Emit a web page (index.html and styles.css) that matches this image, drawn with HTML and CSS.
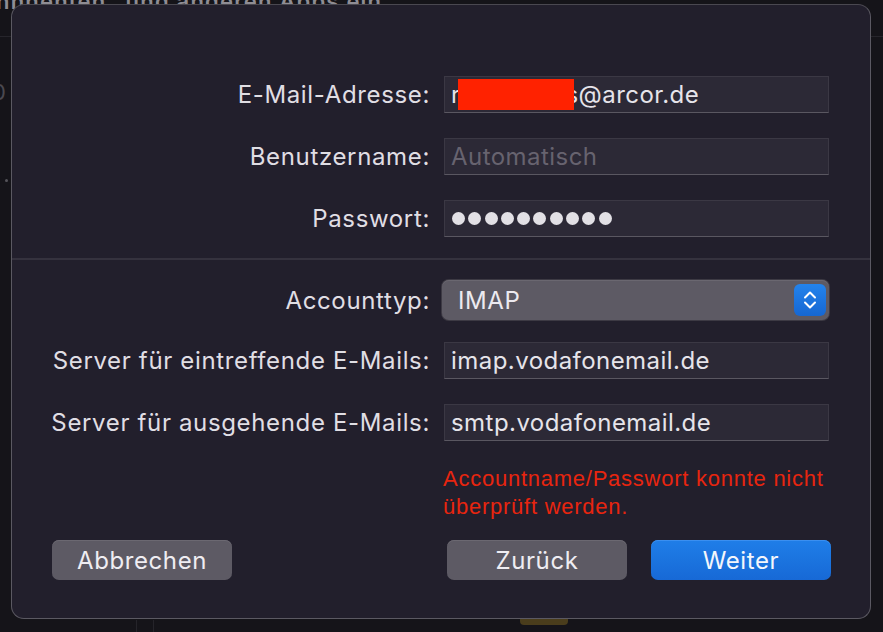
FILE: index.html
```html
<!DOCTYPE html>
<html lang="de">
<head>
<meta charset="utf-8">
<title>Account hinzufügen</title>
<link rel="stylesheet" href="styles.css">
</head>
<body>
<div class="backdrop">
  <div class="bg-text">nhnenten" und anderen Apps ein.</div>
  <div class="bg-rule"></div>
  <div class="bg-digit">0</div>
  <div class="bg-dot"></div>
  <div class="bg-vline one"></div>
  <div class="bg-vline two"></div>
  <div class="bg-tab"></div>

  <div class="sheet">
    <div class="form">
      <label class="label">E-Mail-Adresse:</label>
      <div class="field">r<span class="redact"></span>s@arcor.de</div>

      <label class="label">Benutzername:</label>
      <div class="field placeholder">Automatisch</div>

      <label class="label">Passwort:</label>
      <div class="field dots">
        <span></span><span></span><span></span><span></span><span></span><span></span><span></span><span></span><span></span><span></span>
      </div>
    </div>

    <div class="separator"></div>

    <div class="form lower">
      <label class="label">Accounttyp:</label>
      <div class="popup">
        <span>IMAP</span>
        <span class="stepper">
          <svg width="16" height="22" viewBox="0 0 16 22" fill="none" stroke="#ffffff" stroke-width="2" stroke-linecap="round" stroke-linejoin="round">
            <path d="M3 8.5 L8 3.5 L13 8.5"/>
            <path d="M3 13.5 L8 18.5 L13 13.5"/>
          </svg>
        </span>
      </div>

      <label class="label">Server für eintreffende E-Mails:</label>
      <div class="field">imap.vodafonemail.de</div>

      <label class="label spaced">Server für ausgehende E-Mails:</label>
      <div class="field spaced">smtp.vodafonemail.de</div>

      <div class="error">Accountname/Passwort konnte nicht überprüft werden.</div>
    </div>

    <div class="buttons">
      <button class="btn">Abbrechen</button>
      <div class="btn-group">
        <button class="btn">Zurück</button>
        <button class="btn primary">Weiter</button>
      </div>
    </div>
  </div>
</div>
</body>
</html>
```

FILE: styles.css
```css
html, body {
  margin: 0;
  padding: 0;
}

body {
  width: 883px;
  height: 632px;
  overflow: hidden;
  background: #151419;
  font-family: Inter, "Noto Sans", "Liberation Sans", sans-serif;
  color: #dedce2;
}

.backdrop {
  position: relative;
  width: 883px;
  height: 632px;
}

.bg-text {
  position: absolute;
  left: -4px;
  top: -12px;
  font-size: 22px;
  font-weight: 600;
  color: #8f8d94;
  letter-spacing: 1.2px;
  white-space: nowrap;
}

.bg-rule {
  position: absolute;
  left: 0;
  top: 36px;
  width: 883px;
  height: 1px;
  background: #26252b;
}

.bg-digit {
  position: absolute;
  left: -8px;
  top: 79px;
  font-size: 22px;
  color: #4a4950;
}

.bg-dot {
  position: absolute;
  left: 5px;
  top: 179px;
  width: 3px;
  height: 3px;
  border-radius: 50%;
  background: #55545a;
}

.bg-vline {
  position: absolute;
  top: 620px;
  width: 1px;
  height: 12px;
  background: #25242a;
}
.bg-vline.one { left: 136px; }
.bg-vline.two { left: 153px; }

.bg-tab {
  position: absolute;
  left: 520px;
  top: 619px;
  width: 48px;
  height: 6px;
  border-radius: 0 0 4px 4px;
  background: #4a3d1c;
}

.sheet {
  position: absolute;
  left: 11px;
  top: 4px;
  width: 860px;
  height: 615px;
  box-sizing: border-box;
  border: 1px solid #5b5962;
  border-top-color: #4a4850;
  border-radius: 13px;
  background: #221f2c;
  padding-top: 71px;
  display: flex;
  flex-direction: column;
}

.form {
  display: grid;
  grid-template-columns: 418px 385px;
  column-gap: 14px;
  row-gap: 25px;
  align-items: center;
}

.label {
  text-align: right;
  font-size: 24px;
  letter-spacing: 0.65px;
  color: #e0dee4;
  white-space: nowrap;
}

.field {
  height: 37px;
  box-sizing: border-box;
  background: #2c2936;
  border: 1px solid #3b3844;
  border-bottom-color: #5a5761;
  padding: 0 0 0 6px;
  display: flex;
  align-items: center;
  font-size: 24px;
  letter-spacing: 0.45px;
  color: #e6e4ea;
  white-space: nowrap;
}

.field.placeholder {
  color: #67636f;
}

.redact {
  display: inline-block;
  width: 116px;
  height: 31px;
  margin-left: -3px;
  margin-right: -8px;
  background: #ff2200;
  position: relative;
  z-index: 1;
}

.field.dots {
  gap: 3.3px;
  padding-left: 7px;
}

.field.dots span {
  width: 13px;
  height: 13px;
  border-radius: 50%;
  background: #e2e0e5;
}

.separator {
  height: 2px;
  background: #35323e;
  margin: 21px 0 20px;
}

.form.lower {
  row-gap: 22px;
}

.form.lower .spaced {
  margin-top: 3px;
}

.popup {
  height: 40px;
  margin-left: -2px;
  box-sizing: border-box;
  border-radius: 7px;
  background: #5d5a64;
  box-shadow: inset 0 1px 0 #6a6770, 0 0 0 1px #3d3a44;
  display: flex;
  align-items: center;
  justify-content: space-between;
  padding: 0 3px 0 16px;
  font-size: 24px;
  letter-spacing: 0.6px;
  color: #eceaf0;
}

.stepper {
  width: 32px;
  height: 32px;
  border-radius: 6px;
  background: linear-gradient(#2383ec, #1667d2);
  display: flex;
  align-items: center;
  justify-content: center;
}

.error {
  grid-column: 2;
  margin-top: 2px;
  margin-left: -1px;
  font-family: "Liberation Sans", Arial, sans-serif;
  font-size: 22px;
  line-height: 28px;
  color: #e8250f;
  letter-spacing: 0.75px;
}

.buttons {
  display: flex;
  justify-content: space-between;
  padding: 19px 39px 0 40px;
}

.btn-group {
  display: flex;
  gap: 24px;
}

.btn {
  width: 180px;
  height: 40px;
  border: none;
  border-radius: 7px;
  background: #5d5a64;
  box-shadow: inset 0 1px 0 #6b6871;
  font-family: Inter, "Noto Sans", "Liberation Sans", sans-serif;
  font-size: 24px;
  letter-spacing: 0.6px;
  color: #efedf2;
  padding: 0;
}

.btn.primary {
  background: linear-gradient(#1f7ee8, #1769d6);
  box-shadow: inset 0 1px 0 #3a8ff0;
  color: #f4f6fb;
}
```
